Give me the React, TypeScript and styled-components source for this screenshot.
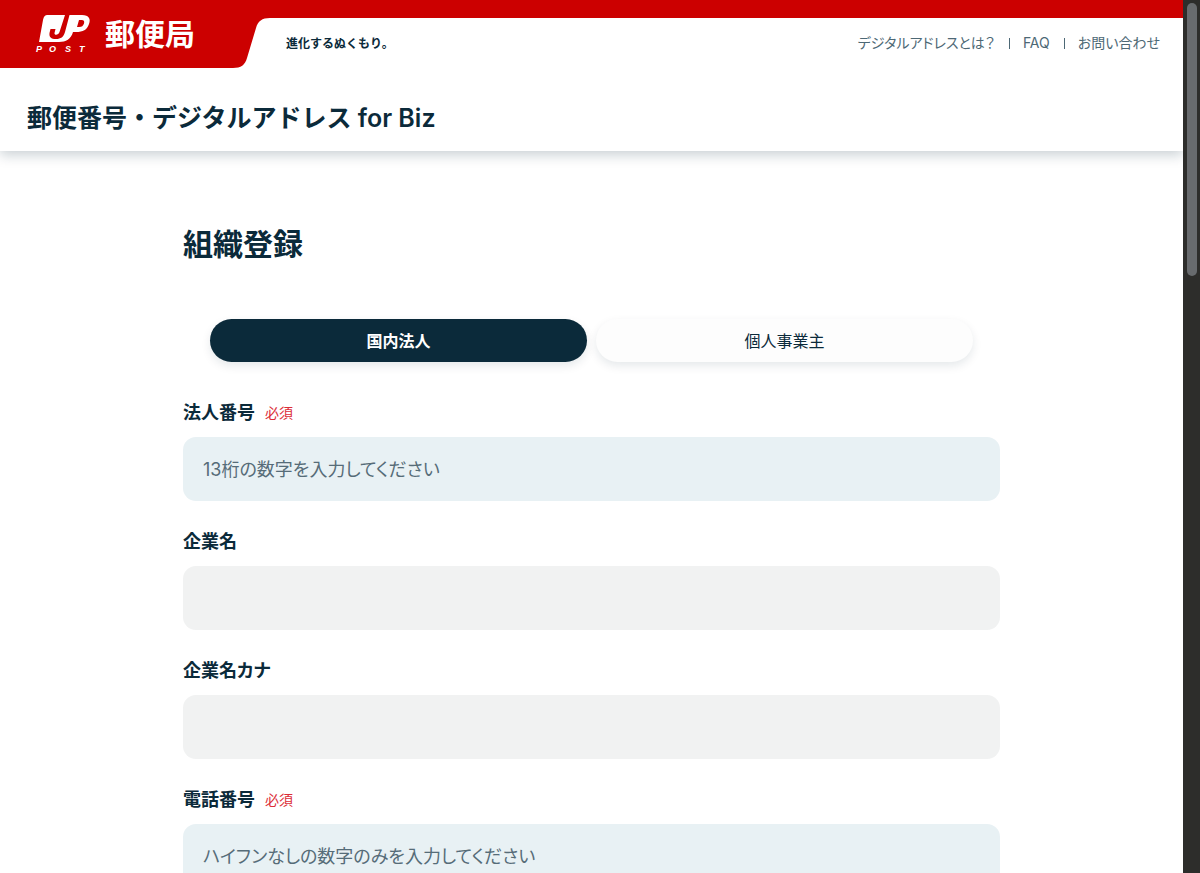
import React from "react";
import styled, { createGlobalStyle } from "styled-components";

const navy = "#0b2a3a";
const red = "#cc0000";

const GlobalStyle = createGlobalStyle`
  *, *::before, *::after { box-sizing: border-box; }
  body {
    margin: 0;
    background: #fff;
    color: ${navy};
    font-family: Inter, "Noto Sans CJK JP", sans-serif;
    font-feature-settings: "palt";
  }
`;

const Shell = styled.div`
  display: flex;
  height: 100vh;
  overflow: hidden;
`;

const Page = styled.div`
  flex: 1;
  min-width: 0;
  overflow-y: auto;
  scrollbar-width: none;
`;

const ScrollRail = styled.div`
  flex: none;
  width: 17px;
  padding: 3px 3px 0 4px;
  background: #2d2d2b;
`;

const ScrollThumb = styled.div`
  height: 273px;
  border-radius: 5px;
  background: #686b6e;
`;

const Header = styled.header`
  background: #fff;
  box-shadow: 0 4px 12px rgba(11, 42, 58, 0.22);
`;

const TopBar = styled.div`
  display: flex;
  align-items: center;
  height: 68px;
  padding-right: 23px;
  background: linear-gradient(${red} 18px, #fff 18px);
`;

const Brand = styled.a`
  flex: none;
  height: 68px;
`;

const BrandArt = styled.svg`
  display: block;
  font-feature-settings: normal;
`;

const Tagline = styled.p`
  flex: 1;
  margin: 0 0 0 13px;
  padding-top: 20px;
  font-size: 12px;
  line-height: 20px;
  font-weight: 700;
  font-feature-settings: normal;
`;

const Nav = styled.nav`
  padding-top: 18px;
`;

const NavList = styled.ul`
  display: flex;
  margin: 0;
  padding: 0;
  list-style: none;
`;

const NavItem = styled.li`
  display: flex;
  align-items: center;
  font-size: 14px;
  line-height: 20px;

  & + &::before {
    content: "";
    width: 1px;
    height: 11px;
    margin: 0 13px 0 14px;
    background: #4d6875;
  }
`;

const NavLink = styled.a`
  color: #4d6875;
  text-decoration: none;
`;

const ServiceName = styled.p`
  margin: 0;
  padding: 30px 27px 13px;
  font-size: 25px;
  line-height: 40px;
  font-weight: 600;
  font-feature-settings: normal;
`;

const Main = styled.main`
  max-width: 817px;
  margin: 0 auto;
  padding: 69px 0 40px;
`;

const Title = styled.h1`
  margin: 0;
  font-size: 30px;
  line-height: 48px;
  font-weight: 700;
`;

const Tabs = styled.div`
  display: flex;
  gap: 9px;
  margin: 51px 27px 0;
`;

const Tab = styled.button<{ $active?: boolean }>`
  flex: 1;
  height: 43px;
  padding: 0;
  border: 0;
  border-radius: 22px;
  background: ${(p) => (p.$active ? navy : "#fdfdfd")};
  color: ${(p) => (p.$active ? "#fff" : navy)};
  box-shadow: 0 4px 10px rgba(11, 42, 58, 0.1);
  font: inherit;
  font-size: 16px;
  line-height: 24px;
  font-weight: ${(p) => (p.$active ? 700 : 400)};
`;

const Form = styled.form`
  display: grid;
  gap: 25px;
  margin-top: 35px;
`;

const Field = styled.div`
  display: grid;
  gap: 8px;
`;

const FieldHead = styled.div`
  display: flex;
  align-items: center;
  gap: 10px;
  line-height: 32px;
`;

const Label = styled.label`
  font-size: 18px;
  font-weight: 700;
`;

const Required = styled.span`
  color: #dc2d37;
  font-size: 14px;
`;

const TextInput = styled.input`
  width: 100%;
  height: 64px;
  padding: 0 20px;
  border: 0;
  border-radius: 13px;
  background: #e8f1f4;
  color: ${navy};
  font: inherit;
  font-size: 18px;
  line-height: 28px;
  font-feature-settings: "palt";

  &::placeholder {
    color: #566c78;
    opacity: 1;
  }

  &:read-only {
    background: #f1f2f2;
  }
`;

type FieldSpec = {
  id: string;
  label: string;
  required?: boolean;
  placeholder?: string;
};

const fields: FieldSpec[] = [
  { id: "corporate-number", label: "法人番号", required: true, placeholder: "13桁の数字を入力してください" },
  { id: "company-name", label: "企業名" },
  { id: "company-kana", label: "企業名カナ" },
  { id: "phone", label: "電話番号", required: true, placeholder: "ハイフンなしの数字のみを入力してください" },
];

const links = ["デジタルアドレスとは？", "FAQ", "お問い合わせ"];

function Logo() {
  return (
    <BrandArt width="273" height="68" viewBox="0 0 273 68" role="img" aria-label="郵便局">
      <path d="M0 0H273V18H270C262 18 258 21 256 28L247 58C245 65 241 68 233 68H0Z" fill={red} />
      <path
        d="M48 15H82C89 15 91 19 89 24C87 30 83 32 76 32H73C71 39 66 42 59 42H39L43 20C44 16 45 15 48 15Z"
        fill="#fff"
      />
      <path d="M79 20L77 27H79C82 27 83 26 84 23.500C84.500 21 84 20 81 20Z" fill={red} />
      <path
        d="M50.500 29H55.500L54.500 33C54 35.500 58.500 35.500 59.500 32L65 15H69.500L65 32C63.500 37 61 39 56 39C51 39 49 37 49.500 33Z"
        fill={red}
      />
      <g fill="#fff">
        <g fontFamily="Liberation Sans, sans-serif" fontSize="9" fontWeight="700" fontStyle="italic">
          <text x="36" y="52">P</text>
          <text x="49" y="52">O</text>
          <text x="65" y="52">S</text>
          <text x="79" y="52">T</text>
        </g>
        <text x="105" y="45" fontSize="30" fontWeight="600">郵便局</text>
      </g>
    </BrandArt>
  );
}

export default function App() {
  return (
    <>
      <GlobalStyle />
      <Shell>
        <Page>
          <Header>
            <TopBar>
              <Brand href="#">
                <Logo />
              </Brand>
              <Tagline>進化するぬくもり。</Tagline>
              <Nav>
                <NavList>
                  {links.map((text) => (
                    <NavItem key={text}>
                      <NavLink href="#">{text}</NavLink>
                    </NavItem>
                  ))}
                </NavList>
              </Nav>
            </TopBar>
            <ServiceName>郵便番号・デジタルアドレス for Biz</ServiceName>
          </Header>
          <Main>
            <Title>組織登録</Title>
            <Tabs>
              <Tab type="button" $active aria-pressed="true">国内法人</Tab>
              <Tab type="button" aria-pressed="false">個人事業主</Tab>
            </Tabs>
            <Form>
              {fields.map((f) => (
                <Field key={f.id}>
                  <FieldHead>
                    <Label htmlFor={f.id}>{f.label}</Label>
                    {f.required && <Required>必須</Required>}
                  </FieldHead>
                  <TextInput id={f.id} type="text" placeholder={f.placeholder} readOnly={!f.required} />
                </Field>
              ))}
            </Form>
          </Main>
        </Page>
        <ScrollRail aria-hidden="true">
          <ScrollThumb />
        </ScrollRail>
      </Shell>
    </>
  );
}
